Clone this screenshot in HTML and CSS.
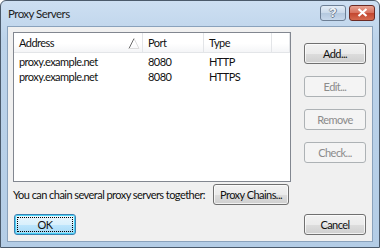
FILE: index.html
```html
<!DOCTYPE html>
<html lang="en">
<head>
    <meta charset="UTF-8">
    <title>Proxy Servers</title>
    <link rel="stylesheet" href="styles.css">
</head>
<body>
    <div class="window">
        <div class="titlebar">
            <span class="title">Proxy Servers</span>
            <div class="caption-buttons">
                <div class="cap-btn help">?</div>
                <div class="cap-btn close">
                    <svg width="11" height="9" viewBox="0 0 11 9">
                        <path d="M1.5 1 L9.5 8 M9.5 1 L1.5 8" stroke="#fff" stroke-width="2.2"/>
                    </svg>
                </div>
            </div>
        </div>

        <div class="client">
            <div class="main">
                <div class="list">
                    <div class="list-header">
                        <div class="col col-address">Address
                            <svg class="sort" width="12" height="12" viewBox="0 0 12 12">
                                <path d="M1 11.5 L6 1.5" stroke="#6d6d6d" stroke-width="1" fill="none"/>
                                <path d="M6 1.5 L11 11.5 L1 11.5" stroke="#dcdcdc" stroke-width="1" fill="none"/>
                            </svg>
                        </div>
                        <div class="col col-port">Port</div>
                        <div class="col col-type">Type</div>
                        <div class="col col-rest"></div>
                    </div>
                    <div class="row">
                        <div class="col col-address">proxy.example.net</div>
                        <div class="col col-port">8080</div>
                        <div class="col col-type">HTTP</div>
                    </div>
                    <div class="row">
                        <div class="col col-address">proxy.example.net</div>
                        <div class="col col-port">8080</div>
                        <div class="col col-type">HTTPS</div>
                    </div>
                </div>

                <div class="side-buttons">
                    <button class="btn">Add...</button>
                    <button class="btn" disabled>Edit...</button>
                    <button class="btn" disabled>Remove</button>
                    <button class="btn" disabled>Check...</button>
                </div>
            </div>

            <div class="chain-row">
                <span class="chain-text">You can chain several proxy servers together:</span>
                <button class="btn btn-chains">Proxy Chains...</button>
            </div>

            <div class="footer">
                <button class="btn btn-default"><span class="focus">OK</span></button>
                <button class="btn">Cancel</button>
            </div>
        </div>
    </div>
</body>
</html>
```

FILE: styles.css
```css
* {
    margin: 0;
    padding: 0;
    box-sizing: border-box;
}

body {
    background-color: #ffffff;
    font-family: Lato, "Noto Sans", sans-serif;
    font-size: 11px;
    letter-spacing: -0.55px;
    color: #111;
}

.window {
    width: 380px;
    height: 248px;
    display: flex;
    flex-direction: column;
    border: 1px solid #4b5a6b;
    border-radius: 6px 6px 0 0;
    background: linear-gradient(#cddff2, #bcd3ea 40px, #b4cde6);
    padding: 0 6px 6px 6px;
}

.titlebar {
    height: 25px;
    display: flex;
    align-items: center;
    justify-content: space-between;
    flex-shrink: 0;
}

.title {
    font-size: 11.5px;
    color: #1e1e1e;
    padding-left: 1px;
    margin-top: -1px;
}

.caption-buttons {
    display: flex;
    gap: 3px;
    margin-right: -2px;
    margin-top: -2px;
}

.cap-btn {
    width: 26px;
    height: 16px;
    border: 1px solid #6d7f95;
    border-radius: 3px;
    display: flex;
    align-items: center;
    justify-content: center;
}

.help {
    background: linear-gradient(#e4edf7, #c9d9ea 50%, #b4c8de 51%, #c7d8eb);
    color: #f4f7fa;
    font-weight: bold;
    font-size: 12px;
    font-family: "Liberation Sans", sans-serif;
    letter-spacing: 0;
    text-shadow: 1px 0 0 #6a7b90, -1px 0 0 #8d9cae, 0 1px 0 #6a7b90;
}

.close {
    width: 26px;
    border-color: #6b2a24;
    background: linear-gradient(#e8a393, #d7705c 50%, #c3462f 51%, #d56a4f);
}

.client {
    flex: 1;
    background-color: #f0f0f0;
    border: 1px solid #8aa2bc;
    padding: 5px 6px 6px 5px;
    display: flex;
    flex-direction: column;
}

.main {
    display: flex;
    justify-content: space-between;
}

.list {
    width: 278px;
    height: 150px;
    background-color: #fff;
    border: 1px solid #828790;
}

.list-header {
    display: flex;
    height: 20px;
    border-bottom: 1px solid #e3e5e8;
    background: linear-gradient(#ffffff 55%, #f4f5f7);
}

.list-header .col {
    border-right: 1px solid #e3e5e8;
    line-height: 19px;
}

.col {
    padding-left: 5px;
    white-space: nowrap;
}

.col-address {
    width: 129px;
    position: relative;
}

.col-port {
    width: 61px;
}

.col-type {
    width: 68px;
}

.col-rest {
    width: 18px;
}

.sort {
    position: absolute;
    right: 2px;
    top: 4px;
}

.row {
    display: flex;
    height: 15px;
    line-height: 15px;
}

.list-header + .row {
    margin-top: 1px;
}

.side-buttons {
    display: flex;
    flex-direction: column;
    gap: 12px;
    padding-top: 11px;
}

.btn {
    width: 62px;
    height: 21px;
    font-family: inherit;
    font-size: 11px;
    letter-spacing: inherit;
    color: #111;
    border: 1px solid #707070;
    border-radius: 3px;
    background: linear-gradient(#f2f2f2, #ebebeb 50%, #dddddd 51%, #cfcfcf);
    box-shadow: inset 0 0 0 1px rgba(255, 255, 255, 0.7);
    white-space: nowrap;
}

.btn:disabled {
    color: #8b8b8b;
    border-color: #adb2b5;
    background: #f4f4f4;
    box-shadow: none;
}

.chain-row {
    display: flex;
    align-items: center;
    justify-content: space-between;
    margin-top: 2px;
    padding-right: 77px;
}

.chain-text {
    white-space: nowrap;
}

.btn-chains {
    width: 76px;
}

.footer {
    display: flex;
    justify-content: space-between;
    margin-top: 9px;
    padding-left: 1px;
}

.btn-default {
    border-color: #3c7fb1;
    background: linear-gradient(#eaf6fd, #d9f0fc 50%, #bee6fd 51%, #a7d9f5);
    box-shadow: inset 0 0 0 1px #48d2f5;
    padding: 2px;
}

.focus {
    display: block;
    height: 100%;
    border: 1px dotted #000;
    line-height: 13px;
}
```
